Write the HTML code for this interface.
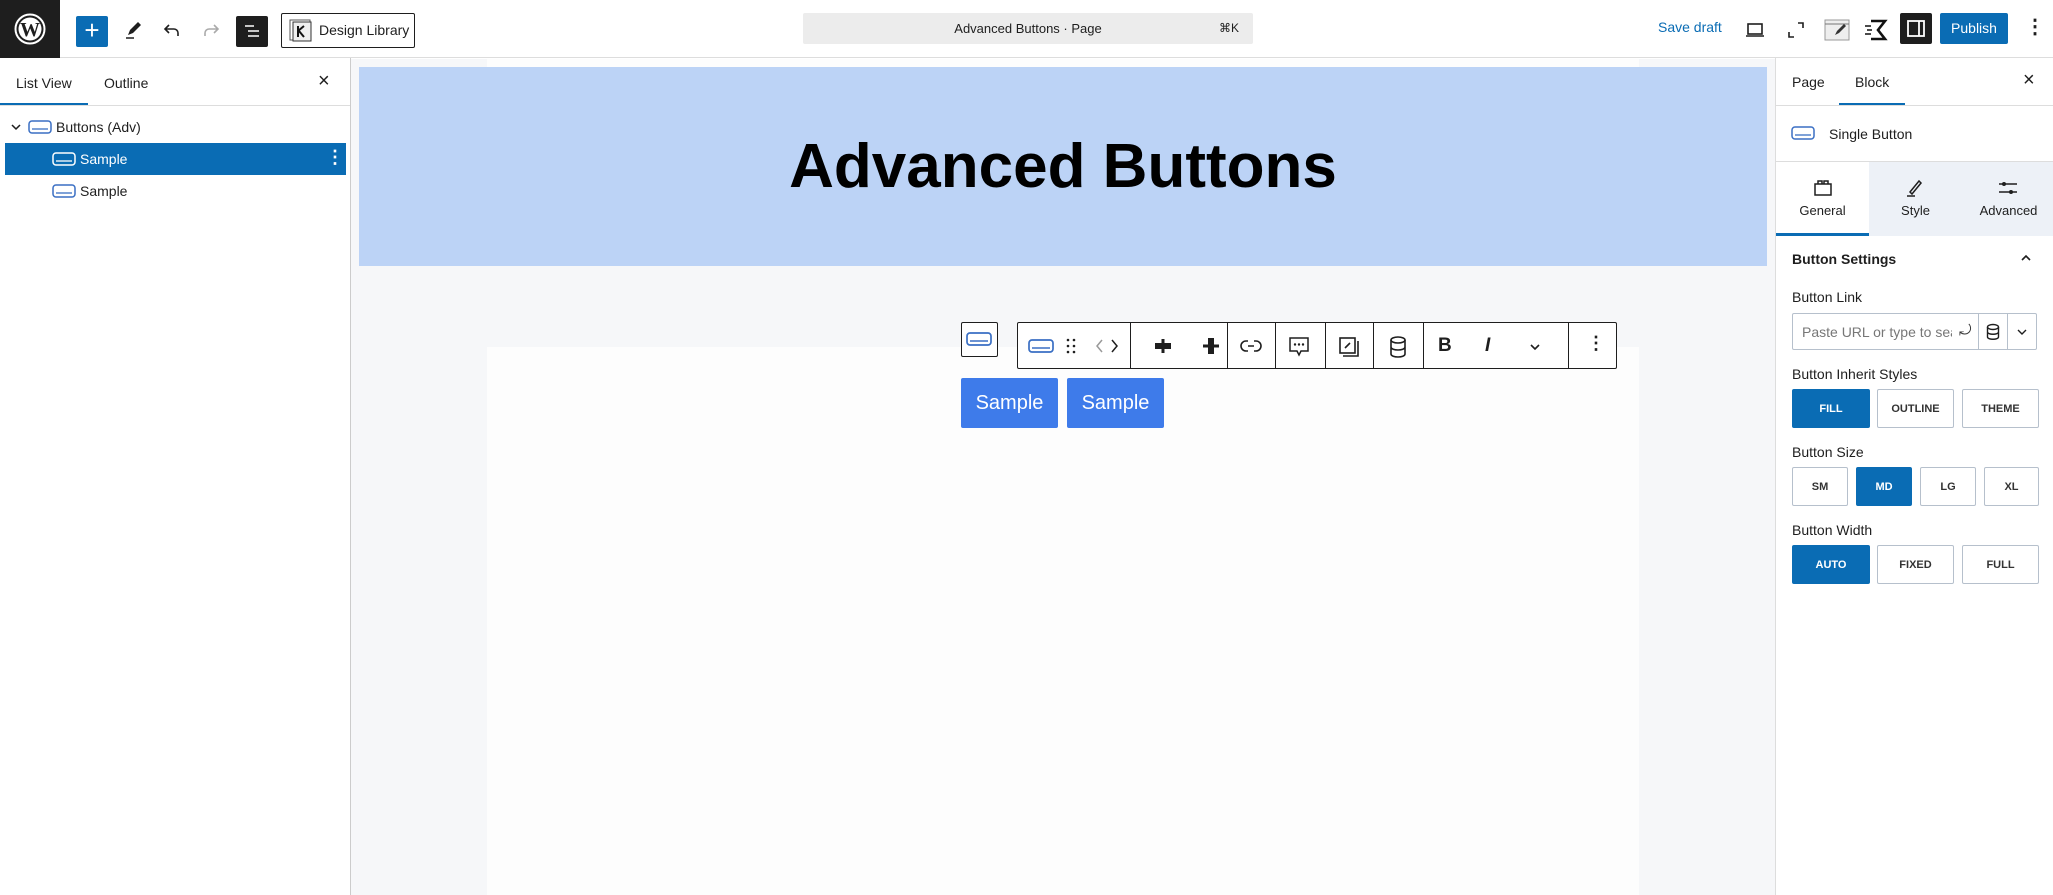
<!DOCTYPE html>
<html><head><meta charset="utf-8"><style>
*{box-sizing:border-box;margin:0;padding:0}
body{width:2053px;height:895px;overflow:hidden;background:#fff;font-family:"Liberation Sans",sans-serif;color:#1e1e1e;position:relative}
.a{position:absolute}
.sep{position:absolute;top:0;bottom:0;width:1px;background:#1e1e1e}
.opt{position:absolute;border:1px solid #b6c0cc;border-radius:2px;font-size:11px;font-weight:bold;display:flex;align-items:center;justify-content:center;color:#333;background:#fff}
.opt.on{background:#0a6cb4;border-color:#0a6cb4;color:#fff}
.lbl{position:absolute;left:1792px;font-size:14px;color:#1e1e1e}
svg{display:block}
</style></head><body>
<div class="a" style="left:0;top:0;width:2053px;height:58px;border-bottom:1px solid #ddd;background:#fff"></div>
<div class="a" style="left:0;top:0;width:60px;height:58px;background:#1e1e1e;display:flex;align-items:center;justify-content:center">
<svg width="32" height="32" viewBox="0 0 32 32"><circle cx="16" cy="16" r="14.5" fill="none" stroke="#fff" stroke-width="2"/><circle cx="16" cy="16" r="11.5" fill="#fff"/><text x="16" y="23" text-anchor="middle" font-family="Liberation Serif" font-weight="bold" font-size="20" fill="#1e1e1e">W</text></svg></div>
<div class="a" style="left:76px;top:16px;width:32px;height:31px;background:#0a6cb4;border-radius:2px;color:#fff;font-size:26px;line-height:29px;text-align:center">+</div>
<svg class="a" style="left:121px;top:18px" width="24" height="24" viewBox="0 0 24 24"><path d="M7 17l2-5 8-8 3 3-8 8z" fill="#1e1e1e"/><path d="M5 20h8" stroke="#1e1e1e" stroke-width="1.5"/></svg>
<svg class="a" style="left:160px;top:18px" width="24" height="24" viewBox="0 0 24 24"><path d="M9 7l-4 4 4 4M5 11h9a4 4 0 0 1 4 4v3" fill="none" stroke="#1e1e1e" stroke-width="1.6"/></svg>
<svg class="a" style="left:199px;top:18px" width="24" height="24" viewBox="0 0 24 24"><path d="M15 7l4 4-4 4M19 11h-9a4 4 0 0 0-4 4v3" fill="none" stroke="#aaa" stroke-width="1.6"/></svg>
<div class="a" style="left:236px;top:16px;width:32px;height:31px;background:#1e1e1e;border-radius:2px"><svg width="32" height="31"><path d="M9 10h9M12 15h11M12 20h11" stroke="#fff" stroke-width="1.6"/></svg></div>
<div class="a" style="left:281px;top:13px;width:134px;height:35px;border:1px solid #1e1e1e;border-radius:2px;font-size:14px;line-height:33px;padding-left:37px">Design Library</div>
<svg class="a" style="left:289px;top:19px" width="24" height="24" viewBox="0 0 24 24"><rect x="1" y="1" width="20" height="20" fill="#fff" stroke="#555"/><rect x="4" y="3" width="18" height="19" fill="#eee" stroke="#333"/><path d="M9 7v11M9 12l6-5M10 12l5 6" stroke="#111" stroke-width="2"/></svg>
<div class="a" style="left:803px;top:13px;width:450px;height:31px;background:#ececec;border-radius:2px;font-size:13px;line-height:31px;text-align:center">Advanced Buttons · Page</div>
<div class="a" style="left:1219px;top:13px;font-size:12px;line-height:31px">⌘K</div>
<div class="a" style="left:1658px;top:19px;font-size:14px;color:#0a6cb4">Save draft</div>
<svg class="a" style="left:1743px;top:18px" width="24" height="24" viewBox="0 0 24 24"><rect x="5" y="6" width="14" height="10" fill="none" stroke="#1e1e1e" stroke-width="1.6"/><path d="M3 18h18" stroke="#1e1e1e" stroke-width="1.6"/></svg>
<svg class="a" style="left:1784px;top:18px" width="24" height="24" viewBox="0 0 24 24"><path d="M5 14v5h5M19 10V5h-5" fill="none" stroke="#1e1e1e" stroke-width="1.6"/></svg>
<svg class="a" style="left:1824px;top:17px" width="26" height="26" viewBox="0 0 26 26"><rect x="1" y="3" width="24" height="20" fill="#eee" stroke="#999"/><path d="M1 7h24" stroke="#777"/><path d="M11 18l2-4 7-7 2 2-7 7z" fill="#333"/></svg>
<svg class="a" style="left:1863px;top:17px" width="26" height="26" viewBox="0 0 26 26"><path d="M8 4h14l-7 9 7 9H8" fill="none" stroke="#111" stroke-width="2.6"/><path d="M2 9h6M4 13h5M2 17h6" stroke="#111" stroke-width="1.5"/></svg>
<div class="a" style="left:1900px;top:13px;width:32px;height:31px;background:#1e1e1e;border-radius:2px"><svg width="32" height="31"><rect x="8" y="8" width="16" height="15" fill="none" stroke="#fff" stroke-width="1.8"/><path d="M19 8v15" stroke="#fff" stroke-width="1.8"/></svg></div>
<div class="a" style="left:1940px;top:13px;width:68px;height:31px;background:#0a6cb4;border-radius:2px;color:#fff;font-size:14px;line-height:31px;text-align:center">Publish</div>
<div class="a" style="left:2025px;top:13px;font-size:20px;line-height:28px;font-weight:bold">⋮</div>

<div class="a" style="left:350px;top:58px;width:1px;height:837px;background:#ccc"></div>
<div class="a" style="left:0;top:105px;width:350px;height:1px;background:#ddd"></div>
<div class="a" style="left:16px;top:75px;font-size:14px">List View</div>
<div class="a" style="left:0;top:103px;width:88px;height:2px;background:#0a6cb4"></div>
<div class="a" style="left:104px;top:75px;font-size:14px">Outline</div>
<div class="a" style="left:318px;top:70px;font-size:20px">×</div>
<svg class="a" style="left:10px;top:121px" width="12" height="12"><path d="M2 4l4 4 4-4" fill="none" stroke="#1e1e1e" stroke-width="1.5"/></svg>
<svg class="a" style="left:28px;top:120px" width="24" height="14" viewBox="0 0 24 14"><rect x="1" y="1" width="22" height="12" rx="3" fill="none" stroke="#3a6fc4" stroke-width="1.5"/><path d="M4 9h16" stroke="#3a6fc4" stroke-width="1.3"/></svg>
<div class="a" style="left:56px;top:119px;font-size:14px">Buttons (Adv)</div>
<div class="a" style="left:5px;top:143px;width:341px;height:32px;background:#0a6cb4"></div>
<svg class="a" style="left:52px;top:152px" width="24" height="14" viewBox="0 0 24 14"><rect x="1" y="1" width="22" height="12" rx="3" fill="none" stroke="#fff" stroke-width="1.5"/><path d="M4 9h16" stroke="#fff" stroke-width="1.3"/></svg>
<div class="a" style="left:80px;top:151px;font-size:14px;color:#fff">Sample</div>
<div class="a" style="left:326px;top:147px;font-size:18px;color:#fff;font-weight:bold">⋮</div>
<svg class="a" style="left:52px;top:184px" width="24" height="14" viewBox="0 0 24 14"><rect x="1" y="1" width="22" height="12" rx="3" fill="none" stroke="#3a6fc4" stroke-width="1.5"/><path d="M4 9h16" stroke="#3a6fc4" stroke-width="1.3"/></svg>
<div class="a" style="left:80px;top:183px;font-size:14px">Sample</div>

<div class="a" style="left:351px;top:59px;width:1424px;height:836px;background:#f6f7f9"></div>
<div class="a" style="left:487px;top:59px;width:1152px;height:836px;background:#fdfdfd"></div>
<div class="a" style="left:351px;top:266px;width:1424px;height:81px;background:#f6f7f9"></div>
<div class="a" style="left:359px;top:67px;width:1408px;height:199px;background:#bcd3f6;display:flex;align-items:center;justify-content:center;font-size:62px;font-weight:bold;color:#000">Advanced Buttons</div>
<div class="a" style="left:961px;top:322px;width:37px;height:35px;border:1px solid #1e1e1e;border-radius:2px;background:#fff"><svg width="35" height="33" viewBox="0 0 35 33"><rect x="5" y="10" width="24" height="12" rx="3" fill="none" stroke="#3a6fc4" stroke-width="1.7"/><path d="M8 18h18" stroke="#3a6fc4" stroke-width="1.4"/></svg></div>
<div class="a" style="left:1017px;top:322px;width:600px;height:47px;border:1px solid #1e1e1e;border-radius:2px;background:#fff">
<div class="sep" style="left:112px"></div><div class="sep" style="left:209px"></div><div class="sep" style="left:257px"></div><div class="sep" style="left:307px"></div><div class="sep" style="left:355px"></div><div class="sep" style="left:405px"></div><div class="sep" style="left:550px"></div>
<svg class="a" style="left:8px;top:10px" width="30" height="26" viewBox="0 0 30 26"><rect x="3" y="7" width="24" height="12" rx="3" fill="none" stroke="#3a6fc4" stroke-width="1.7"/><path d="M6 15h18" stroke="#3a6fc4" stroke-width="1.4"/></svg>
<svg class="a" style="left:46px;top:13px" width="14" height="20"><g fill="#1e1e1e"><circle cx="4" cy="4" r="1.3"/><circle cx="10" cy="4" r="1.3"/><circle cx="4" cy="10" r="1.3"/><circle cx="10" cy="10" r="1.3"/><circle cx="4" cy="16" r="1.3"/><circle cx="10" cy="16" r="1.3"/></g></svg>
<svg class="a" style="left:76px;top:13px" width="28" height="20"><path d="M8 4l-5 6 5 6" fill="none" stroke="#999" stroke-width="1.5"/><path d="M18 4l5 6-5 6" fill="none" stroke="#1e1e1e" stroke-width="1.5"/></svg>
<svg class="a" style="left:136px;top:14px" width="18" height="18"><rect x="1" y="6" width="16" height="6" fill="#1e1e1e"/><rect x="7.5" y="2" width="3" height="14" fill="#1e1e1e"/></svg>
<svg class="a" style="left:184px;top:14px" width="18" height="18"><rect x="1" y="7.5" width="16" height="3" fill="#1e1e1e"/><rect x="6" y="1" width="6" height="16" fill="#1e1e1e"/></svg>
<svg class="a" style="left:222px;top:14px" width="22" height="18"><path d="M8 4H6a5 5 0 0 0 0 10h2M14 4h2a5 5 0 0 1 0 10h-2M8 9h6" fill="none" stroke="#1e1e1e" stroke-width="1.6"/></svg>
<svg class="a" style="left:269px;top:12px" width="24" height="24"><path d="M3 3h18v13h-7l-2 4-2-4H3z" fill="none" stroke="#1e1e1e" stroke-width="1.5"/><g fill="#1e1e1e"><circle cx="8" cy="9.5" r="1.2"/><circle cx="12" cy="9.5" r="1.2"/><circle cx="16" cy="9.5" r="1.2"/></g></svg>
<svg class="a" style="left:319px;top:12px" width="24" height="24"><rect x="3" y="3" width="15" height="15" fill="none" stroke="#1e1e1e" stroke-width="1.6"/><path d="M21 6v15H6M8 13l5-5" fill="none" stroke="#1e1e1e" stroke-width="1.6"/></svg>
<svg class="a" style="left:368px;top:12px" width="24" height="24"><ellipse cx="12" cy="5" rx="7" ry="3" fill="none" stroke="#1e1e1e" stroke-width="1.6"/><path d="M5 5v14c0 4 14 4 14 0V5M5 12c0 4 14 4 14 0" fill="none" stroke="#1e1e1e" stroke-width="1.6"/></svg>
<div class="a" style="left:420px;top:12px;font-size:19px;font-weight:bold">B</div>
<div class="a" style="left:467px;top:12px;font-size:19px;font-style:italic;font-weight:bold">I</div>
<svg class="a" style="left:510px;top:18px" width="14" height="12"><path d="M3 4l4 4 4-4" fill="none" stroke="#1e1e1e" stroke-width="1.6"/></svg>
<div class="a" style="left:569px;top:10px;font-size:18px;font-weight:bold">⋮</div>
</div>
<div class="a" style="left:961px;top:378px;width:97px;height:50px;background:#3e7bea;border-radius:2px;color:#fff;font-size:20px;line-height:50px;text-align:center">Sample</div>
<div class="a" style="left:1067px;top:378px;width:97px;height:50px;background:#3e7bea;border-radius:2px;color:#fff;font-size:20px;line-height:50px;text-align:center">Sample</div>

<div class="a" style="left:1775px;top:58px;width:1px;height:837px;background:#ddd"></div>
<div class="a" style="left:1776px;top:105px;width:277px;height:1px;background:#ddd"></div>
<div class="a" style="left:1792px;top:74px;font-size:14px">Page</div>
<div class="a" style="left:1855px;top:74px;font-size:14px">Block</div>
<div class="a" style="left:1839px;top:103px;width:66px;height:2px;background:#0a6cb4"></div>
<div class="a" style="left:2023px;top:69px;font-size:20px">×</div>
<svg class="a" style="left:1791px;top:126px" width="24" height="14" viewBox="0 0 24 14"><rect x="1" y="1" width="22" height="12" rx="3" fill="none" stroke="#3a6fc4" stroke-width="1.5"/><path d="M4 9h16" stroke="#3a6fc4" stroke-width="1.3"/></svg>
<div class="a" style="left:1829px;top:126px;font-size:14px">Single Button</div>
<div class="a" style="left:1776px;top:161px;width:277px;height:75px;background:#edf1f7;border-top:1px solid #ddd"></div>
<div class="a" style="left:1776px;top:162px;width:93px;height:74px;background:#fff;border-bottom:3px solid #0a6cb4"></div>
<svg class="a" style="left:1812px;top:178px" width="22" height="20"><path d="M3 6h16v11H3zM6 6V3h4v3M12 6V3h4v3" fill="none" stroke="#1e1e1e" stroke-width="1.5"/></svg>
<div class="a" style="left:1776px;top:203px;width:93px;text-align:center;font-size:13px">General</div>
<svg class="a" style="left:1904px;top:177px" width="22" height="22"><path d="M6 15l9-11 2 2-9 11zM3 19h8" fill="none" stroke="#1e1e1e" stroke-width="1.5"/></svg>
<div class="a" style="left:1869px;top:203px;width:93px;text-align:center;font-size:13px">Style</div>
<svg class="a" style="left:1997px;top:177px" width="22" height="22"><path d="M2 7h18M2 15h18" stroke="#1e1e1e" stroke-width="1.4"/><circle cx="7" cy="7" r="2" fill="#1e1e1e"/><circle cx="14" cy="15" r="2" fill="#1e1e1e"/></svg>
<div class="a" style="left:1962px;top:203px;width:93px;text-align:center;font-size:13px">Advanced</div>
<div class="lbl" style="top:251px;font-weight:bold;font-size:14px">Button Settings</div>
<svg class="a" style="left:2019px;top:252px" width="14" height="12"><path d="M3 8l4-4 4 4" fill="none" stroke="#1e1e1e" stroke-width="1.6"/></svg>
<div class="lbl" style="top:289px">Button Link</div>
<div class="a" style="left:1792px;top:313px;width:245px;height:37px;border:1px solid #b6c0cc;border-radius:2px;background:#fff">
<div class="a" style="left:9px;top:10px;font-size:14px;color:#777;white-space:nowrap;width:150px;overflow:hidden">Paste URL or type to search</div>
<div class="a" style="left:166px;top:8px;font-size:15px;color:#333">⤾</div>
<div class="a" style="left:185px;top:0;width:1px;height:35px;background:#b6c0cc"></div>
<div class="a" style="left:214px;top:0;width:1px;height:35px;background:#b6c0cc"></div>
<svg class="a" style="left:191px;top:9px" width="18" height="18"><ellipse cx="9" cy="4" rx="5.5" ry="2.5" fill="none" stroke="#1e1e1e" stroke-width="1.4"/><path d="M3.5 4v10c0 3 11 3 11 0V4M3.5 9c0 3 11 3 11 0" fill="none" stroke="#1e1e1e" stroke-width="1.4"/></svg>
<svg class="a" style="left:223px;top:13px" width="12" height="10"><path d="M2 3l4 4 4-4" fill="none" stroke="#1e1e1e" stroke-width="1.4"/></svg>
</div>
<div class="lbl" style="top:366px">Button Inherit Styles</div>
<div class="opt on" style="left:1792px;top:389px;width:78px;height:39px">FILL</div>
<div class="opt" style="left:1877px;top:389px;width:77px;height:39px">OUTLINE</div>
<div class="opt" style="left:1962px;top:389px;width:77px;height:39px">THEME</div>
<div class="lbl" style="top:444px">Button Size</div>
<div class="opt" style="left:1792px;top:467px;width:56px;height:39px">SM</div>
<div class="opt on" style="left:1856px;top:467px;width:56px;height:39px">MD</div>
<div class="opt" style="left:1920px;top:467px;width:56px;height:39px">LG</div>
<div class="opt" style="left:1984px;top:467px;width:55px;height:39px">XL</div>
<div class="lbl" style="top:522px">Button Width</div>
<div class="opt on" style="left:1792px;top:545px;width:78px;height:39px">AUTO</div>
<div class="opt" style="left:1877px;top:545px;width:77px;height:39px">FIXED</div>
<div class="opt" style="left:1962px;top:545px;width:77px;height:39px">FULL</div>
</body></html>
